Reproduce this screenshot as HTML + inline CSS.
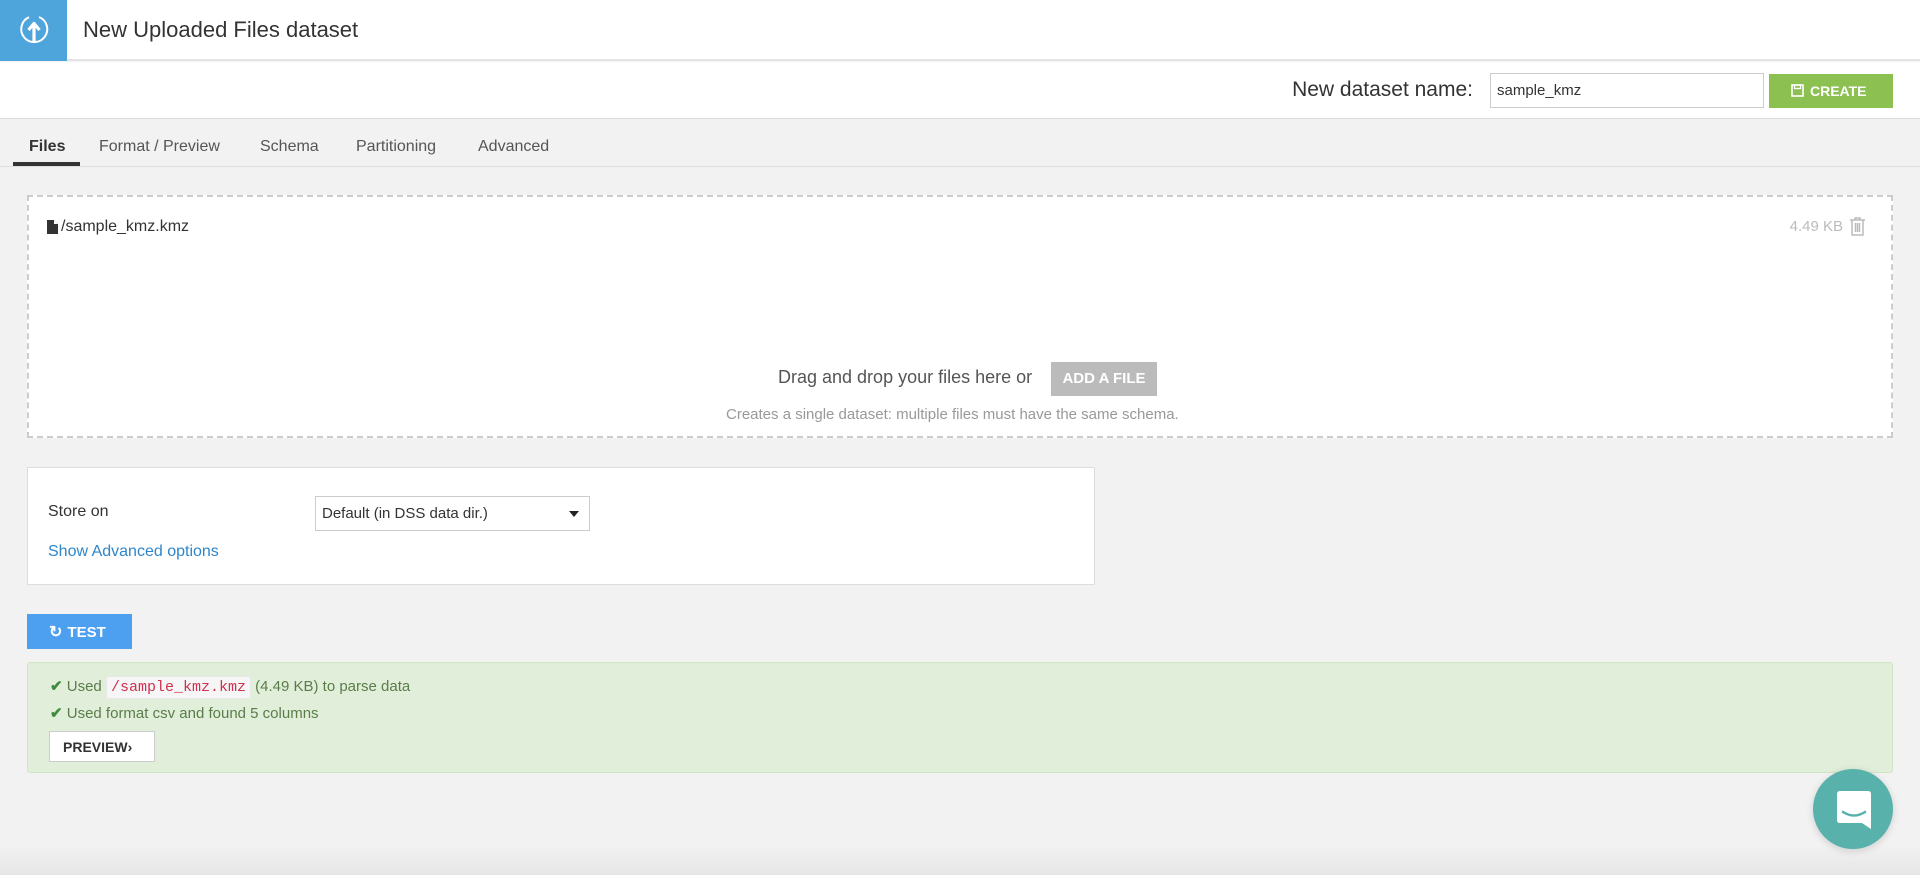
<!DOCTYPE html>
<html><head><meta charset="utf-8"><style>
*{box-sizing:border-box;margin:0;padding:0}
body{width:1920px;height:875px;background:#f2f2f2;font-family:"Liberation Sans",sans-serif;color:#333;position:relative;overflow:hidden}
.a{position:absolute;white-space:nowrap}
</style></head><body>
<div class="a" style="left:0;top:0;width:1920px;height:61px;background:#fff;border-bottom:2px solid #e4e4e4"></div>
<div class="a" style="left:0;top:0;width:67px;height:61px;background:#4ea5db"></div>
<svg class="a" style="left:14px;top:10px" width="40" height="40" viewBox="0 0 40 40"><path d="M25 7A13 13 0 1 1 15 7.2" fill="none" stroke="#fff" stroke-width="2"/><path d="M20 32V15M14.5 20L20 13.5L25.5 20" fill="none" stroke="#fff" stroke-width="3.2" stroke-linejoin="round"/></svg>
<div class="a" style="left:83px;top:17px;font-size:22px;color:#333">New Uploaded Files dataset</div>
<div class="a" style="left:0;top:62px;width:1920px;height:57px;background:#fff;border-bottom:1px solid #ddd"></div>
<div class="a" style="left:1288px;top:78px;font-size:21px;color:#333;width:185px;text-align:right">New dataset name:</div>
<div class="a" style="left:1490px;top:73px;width:274px;height:35px;border:1px solid #ccc;background:#fff;font-size:15px;padding:8px 6px;color:#333">sample_kmz</div>
<div class="a" style="left:1769px;top:74px;width:124px;height:34px;background:#8cc152;color:#fff;font-weight:bold;font-size:14px;padding-top:9px;padding-left:22px"><svg width="13" height="13" viewBox="0 0 13 13" style="vertical-align:-1px;margin-right:6px"><rect x="1" y="1" width="11" height="11" fill="none" stroke="#fff" stroke-width="1.6"/><rect x="3.5" y="1" width="6" height="3.5" fill="none" stroke="#fff" stroke-width="1.3"/></svg>CREATE</div>
<div class="a" style="left:0;top:166px;width:1920px;height:1px;background:#ddd"></div>
<div class="a" style="left:29px;top:138px;font-size:16px;font-weight:bold;color:#333">Files</div>
<div class="a" style="left:13px;top:162px;width:67px;height:4px;background:#333"></div>
<div class="a" style="left:99px;top:138px;font-size:16px;color:#555">Format / Preview</div>
<div class="a" style="left:260px;top:138px;font-size:16px;color:#555">Schema</div>
<div class="a" style="left:356px;top:138px;font-size:16px;color:#555">Partitioning</div>
<div class="a" style="left:478px;top:138px;font-size:16px;color:#555">Advanced</div>
<div class="a" style="left:27px;top:195px;width:1866px;height:243px;background:#fff;border:2px dashed #ccc"></div>
<svg class="a" style="left:47px;top:220px" width="11" height="14" viewBox="0 0 11 14"><path d="M0 0H7L11 4V14H0Z" fill="#333"/><path d="M7 0V4H11" fill="#fff"/></svg>
<div class="a" style="left:61px;top:218px;font-size:16px;color:#333">/sample_kmz.kmz</div>
<div class="a" style="left:1770px;top:218px;font-size:15px;color:#bbb;width:73px;text-align:right">4.49 KB</div>
<svg class="a" style="left:1849px;top:217px" width="17" height="19" viewBox="0 0 17 19"><path d="M1 3H16M6 3V1H11V3M3 3V18H14V3M6.5 6V15M8.5 6V15M10.5 6V15" fill="none" stroke="#bbb" stroke-width="1.5"/></svg>
<div class="a" style="left:778px;top:367px;font-size:18px;color:#555">Drag and drop your files here or</div>
<div class="a" style="left:1051px;top:362px;width:106px;height:34px;background:#bbb;color:#fff;font-weight:bold;font-size:15px;text-align:center;padding-top:8px">ADD A FILE</div>
<div class="a" style="left:726px;top:406px;font-size:15px;color:#999">Creates a single dataset: multiple files must have the same schema.</div>
<div class="a" style="left:27px;top:467px;width:1068px;height:118px;background:#fff;border:1px solid #ddd"></div>
<div class="a" style="left:48px;top:503px;font-size:16px;color:#333">Store on</div>
<div class="a" style="left:315px;top:496px;width:275px;height:35px;border:1px solid #ccc;background:#fff;font-size:15px;padding:8px 6px;color:#333">Default (in DSS data dir.)</div>
<div class="a" style="left:569px;top:511px;width:0;height:0;border-left:5px solid transparent;border-right:5px solid transparent;border-top:6px solid #222"></div>
<div class="a" style="left:48px;top:543px;font-size:16px;color:#2f86c8">Show Advanced options</div>
<div class="a" style="left:27px;top:614px;width:105px;height:35px;background:#4d9ff0;color:#fff;font-weight:bold;font-size:15px;padding-top:8px;padding-left:22px"><span style="font-size:16px;margin-right:5px">&#x21bb;</span>TEST</div>
<div class="a" style="left:27px;top:662px;width:1866px;height:111px;background:#e1eed9;border:1px solid #d0e5c3;border-radius:3px"></div>
<div class="a" style="left:50px;top:677px;font-size:15px;color:#5a7d4a"><span style="color:#3f8b3f;font-weight:bold">&#10004;</span> Used <span style="font-family:'Liberation Mono',monospace;color:#d0304f;background:#f6f6f6;border:1px solid #e8e8e8;border-radius:3px;padding:2px 4px">/sample_kmz.kmz</span> (4.49 KB) to parse data</div>
<div class="a" style="left:50px;top:704px;font-size:15px;color:#5a7d4a"><span style="color:#3f8b3f;font-weight:bold">&#10004;</span> Used format csv and found 5 columns</div>
<div class="a" style="left:49px;top:731px;width:106px;height:31px;background:#fff;border:1px solid #ccc;font-size:14px;font-weight:bold;color:#333;padding-top:7px;padding-left:13px">PREVIEW&#8250;</div>
<div class="a" style="left:0;top:845px;width:1920px;height:30px;background:linear-gradient(#f2f2f2,#e6e6e6)"></div>
<div class="a" style="left:1813px;top:769px;width:80px;height:80px;border-radius:50%;background:#58b1ab;box-shadow:0 2px 8px rgba(0,0,0,.15)"></div>
<svg class="a" style="left:1836px;top:790px" width="36" height="40" viewBox="0 0 36 40"><path d="M4 1H32Q35 1 35 4V39L26 33H4Q1 33 1 30V4Q1 1 4 1Z" fill="#fff"/><path d="M7 22Q18 29 29 22" fill="none" stroke="#58b1ab" stroke-width="2.5" stroke-linecap="round"/></svg>
</body></html>
